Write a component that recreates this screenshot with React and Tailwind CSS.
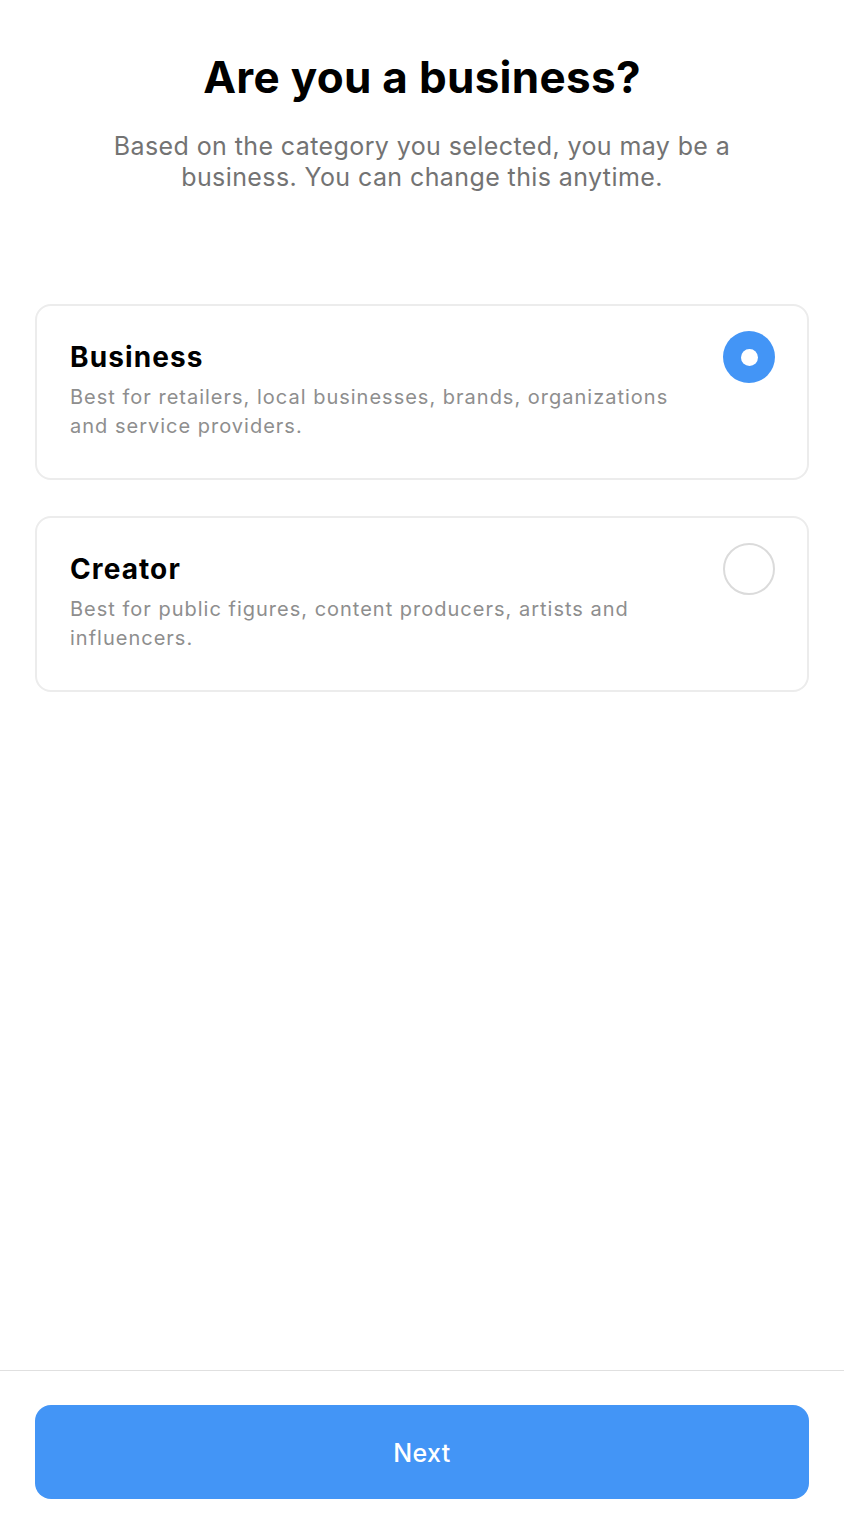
import React, { useState } from 'react';

const options = [
  {
    id: 'business',
    title: 'Business',
    description: 'Best for retailers, local businesses, brands, organizations and service providers.',
  },
  {
    id: 'creator',
    title: 'Creator',
    description: 'Best for public figures, content producers, artists and influencers.',
  },
];

const Radio = ({ checked }) =>
  checked ? (
    <span className="flex h-[52px] w-[52px] shrink-0 items-center justify-center rounded-full bg-[#4395f6]">
      <span className="h-[17px] w-[17px] rounded-full bg-white" />
    </span>
  ) : (
    <span className="h-[52px] w-[52px] shrink-0 rounded-full border-2 border-[#dbdbdb]" />
  );

const App = () => {
  const [selected, setSelected] = useState('business');

  return (
    <div className="flex h-[1536px] flex-col bg-white font-['Inter',sans-serif] text-black">
      <main className="flex-1 px-[35px]">
        <h1 className="mt-[51px] text-center text-[44px] font-bold leading-[52px] tracking-[0.3px]">
          Are you a business?
        </h1>
        <p className="mx-auto mt-[28px] max-w-[660px] text-center text-[25px] leading-[31px] tracking-[0.4px] text-[#737373]">
          Based on the category you selected, you may be a business. You can change this anytime.
        </p>

        <ul className="mt-[111px] space-y-[36px]">
          {options.map((opt) => (
            <li
              key={opt.id}
              onClick={() => setSelected(opt.id)}
              className="flex cursor-pointer items-start justify-between rounded-[16px] border-2 border-[#ececec] pl-[33px] pr-[32px] pt-[25px] pb-[37px]"
            >
              <div className="pt-[9px]">
                <h2 className="text-[28px] font-bold leading-[34px] tracking-[1.1px]">{opt.title}</h2>
                <p className="mt-[9px] max-w-[615px] text-[20px] leading-[29px] tracking-[1px] text-[#8e8e8e]">
                  {opt.description}
                </p>
              </div>
              <Radio checked={selected === opt.id} />
            </li>
          ))}
        </ul>
      </main>

      <footer className="border-t border-[#e0e0e0] px-[35px] pt-[34px] pb-[37px]">
        <button className="h-[94px] w-full rounded-[16px] bg-[#4395f6] pt-[3px] text-[25px] font-medium tracking-[0.4px] text-white">
          Next
        </button>
      </footer>
    </div>
  );
};

export default App;
